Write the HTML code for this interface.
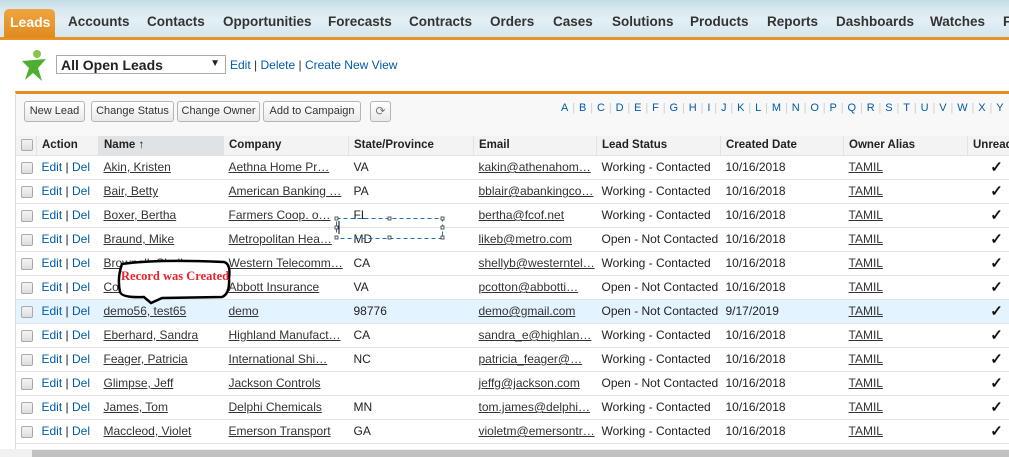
<!DOCTYPE html>
<html><head><meta charset="utf-8"><style>
*{margin:0;padding:0;box-sizing:border-box}
html,body{width:1009px;height:457px;overflow:hidden}
body{background:#fff;font-family:"Liberation Sans",Arial,sans-serif;font-size:12px;color:#222;position:relative}
.tabs{position:absolute;left:0;top:0;width:1009px;height:37px;background:linear-gradient(#c4dbe4 0,#d6e7ee 8px,#e3eff4 20px,#d4e6ee 37px)}
.ob{position:absolute;left:0;top:37px;width:1009px;height:3px;background:#e8922a}
.tab{position:absolute;top:14px;font-size:13.5px;font-weight:bold;color:#333}
.lead{position:absolute;left:4px;top:9px;width:51px;height:29px;background:linear-gradient(#f0a440,#e08a1e);border-radius:5px 5px 0 0;color:#fff;font-weight:bold;font-size:14px;padding:5px 0 0 6px}
.lk{color:#015ba7;text-decoration:none}
.sel{position:absolute;left:56px;top:55px;width:170px;height:19px;border:1px solid #aaa;font-size:14px;font-weight:bold;padding:1px 4px;background:#fff}
.panel{position:absolute;left:15px;top:91px;width:994px;height:46px;background:#f8f8f8;border-top:3px solid #e38d22;border-left:1px solid #ddd}
.btn{position:absolute;top:101px;height:21px;border:1px solid #b5b5b5;border-radius:3px;background:linear-gradient(#fff,#e9e9e9);font-size:11px;padding:3px 0;text-align:center;color:#333;white-space:nowrap;overflow:hidden}
.alpha{position:absolute;left:561px;top:102px;font-size:11px;color:#015ba7;white-space:nowrap}
.alpha i{color:#ccc;font-style:normal;margin:0 3.9px}
table{position:absolute;left:15px;top:136px;border-collapse:collapse;table-layout:fixed;width:1010px;border-left:1px solid #ddd}
td,th{height:24px;white-space:nowrap;overflow:hidden;padding:0 5px;font-size:12px;text-align:left;border-bottom:1px solid #e3e3e3}
th{height:19px;background:#f2f3f3;font-weight:bold;font-size:11.5px;border-right:1px solid #e0e3e5;color:#222}
th.s{background:#e0e3e5}
td u{color:#333}
.cb{display:inline-block;width:12px;height:12px;border:1px solid #aaa;border-radius:2px;background:linear-gradient(#f4f4f4,#ddd);vertical-align:middle}
tr.h td{background:#e3f3ff}
.ck{text-align:center;font-size:15px;font-weight:bold;color:#111}
</style></head><body>
<div class="tabs"></div><div class="ob"></div>
<div class="lead">Leads</div>
<span class="tab" style="left:68px">Accounts</span>
<span class="tab" style="left:147px">Contacts</span>
<span class="tab" style="left:223px">Opportunities</span>
<span class="tab" style="left:328px">Forecasts</span>
<span class="tab" style="left:409px">Contracts</span>
<span class="tab" style="left:490px">Orders</span>
<span class="tab" style="left:553px">Cases</span>
<span class="tab" style="left:612px">Solutions</span>
<span class="tab" style="left:690px">Products</span>
<span class="tab" style="left:767px">Reports</span>
<span class="tab" style="left:836px">Dashboards</span>
<span class="tab" style="left:930px">Watches</span>
<span class="tab" style="left:1003px">F</span>
<svg style="position:absolute;left:20px;top:49px" width="28" height="34" viewBox="0 0 28 34"><circle cx="17" cy="5" r="4" fill="#8bc34a"/><path d="M2 12 L26 10 L18 19 L22 32 L13 24 L5 31 L9 19 Z" fill="#4caf30"/></svg>
<div class="sel">All Open Leads<span style="position:absolute;right:5px;top:2px;font-size:10px">▼</span></div>
<div style="position:absolute;left:230px;top:58px;font-size:12px;color:#015ba7">Edit <span style="color:#333">|</span> Delete <span style="color:#333">|</span> Create New View</div>
<div class="panel"></div>
<div class="btn" style="left:24px;width:61px">New Lead</div>
<div class="btn" style="left:91px;width:83px">Change Status</div>
<div class="btn" style="left:177px;width:83px">Change Owner</div>
<div class="btn" style="left:263px;width:98px">Add to Campaign</div>
<div class="btn" style="left:370px;width:21px;padding:2px 0;font-size:12px;color:#777">⟳</div>
<div class="alpha">A<i>|</i>B<i>|</i>C<i>|</i>D<i>|</i>E<i>|</i>F<i>|</i>G<i>|</i>H<i>|</i>I<i>|</i>J<i>|</i>K<i>|</i>L<i>|</i>M<i>|</i>N<i>|</i>O<i>|</i>P<i>|</i>Q<i>|</i>R<i>|</i>S<i>|</i>T<i>|</i>U<i>|</i>V<i>|</i>W<i>|</i>X<i>|</i>Y</div>
<table>
<colgroup><col style="width:21px"><col style="width:62px"><col style="width:125px"><col style="width:125px"><col style="width:125px"><col style="width:123px"><col style="width:124px"><col style="width:123px"><col style="width:124px"><col style="width:58px"></colgroup>
<tr><th><span class="cb"></span></th><th>Action</th><th class="s">Name ↑</th><th>Company</th><th>State/Province</th><th>Email</th><th>Lead Status</th><th>Created Date</th><th>Owner Alias</th><th>Unread</th></tr>
<tr><td><span class="cb"></span></td><td><span class="lk">Edit</span> | <span class="lk">Del</span></td><td><u>Akin, Kristen</u></td><td><u>Aethna Home Pr…</u></td><td>VA</td><td><u>kakin@athenahom…</u></td><td>Working - Contacted</td><td>10/16/2018</td><td><u>TAMIL</u></td><td class="ck">✓</td></tr>
<tr><td><span class="cb"></span></td><td><span class="lk">Edit</span> | <span class="lk">Del</span></td><td><u>Bair, Betty</u></td><td><u>American Banking …</u></td><td>PA</td><td><u>bblair@abankingco…</u></td><td>Working - Contacted</td><td>10/16/2018</td><td><u>TAMIL</u></td><td class="ck">✓</td></tr>
<tr><td><span class="cb"></span></td><td><span class="lk">Edit</span> | <span class="lk">Del</span></td><td><u>Boxer, Bertha</u></td><td><u>Farmers Coop. o…</u></td><td>FL</td><td><u>bertha@fcof.net</u></td><td>Working - Contacted</td><td>10/16/2018</td><td><u>TAMIL</u></td><td class="ck">✓</td></tr>
<tr><td><span class="cb"></span></td><td><span class="lk">Edit</span> | <span class="lk">Del</span></td><td><u>Braund, Mike</u></td><td><u>Metropolitan Hea…</u></td><td>MD</td><td><u>likeb@metro.com</u></td><td>Open - Not Contacted</td><td>10/16/2018</td><td><u>TAMIL</u></td><td class="ck">✓</td></tr>
<tr><td><span class="cb"></span></td><td><span class="lk">Edit</span> | <span class="lk">Del</span></td><td><u>Brownell, Shelly</u></td><td><u>Western Telecomm…</u></td><td>CA</td><td><u>shellyb@westerntel…</u></td><td>Working - Contacted</td><td>10/16/2018</td><td><u>TAMIL</u></td><td class="ck">✓</td></tr>
<tr><td><span class="cb"></span></td><td><span class="lk">Edit</span> | <span class="lk">Del</span></td><td><u>Cotton, Phyllis</u></td><td><u>Abbott Insurance</u></td><td>VA</td><td><u>pcotton@abbotti…</u></td><td>Open - Not Contacted</td><td>10/16/2018</td><td><u>TAMIL</u></td><td class="ck">✓</td></tr>
<tr class="h"><td><span class="cb"></span></td><td><span class="lk">Edit</span> | <span class="lk">Del</span></td><td><u>demo56, test65</u></td><td><u>demo</u></td><td>98776</td><td><u>demo@gmail.com</u></td><td>Open - Not Contacted</td><td>9/17/2019</td><td><u>TAMIL</u></td><td class="ck">✓</td></tr>
<tr><td><span class="cb"></span></td><td><span class="lk">Edit</span> | <span class="lk">Del</span></td><td><u>Eberhard, Sandra</u></td><td><u>Highland Manufact…</u></td><td>CA</td><td><u>sandra_e@highlan…</u></td><td>Working - Contacted</td><td>10/16/2018</td><td><u>TAMIL</u></td><td class="ck">✓</td></tr>
<tr><td><span class="cb"></span></td><td><span class="lk">Edit</span> | <span class="lk">Del</span></td><td><u>Feager, Patricia</u></td><td><u>International Shi…</u></td><td>NC</td><td><u>patricia_feager@…</u></td><td>Working - Contacted</td><td>10/16/2018</td><td><u>TAMIL</u></td><td class="ck">✓</td></tr>
<tr><td><span class="cb"></span></td><td><span class="lk">Edit</span> | <span class="lk">Del</span></td><td><u>Glimpse, Jeff</u></td><td><u>Jackson Controls</u></td><td></td><td><u>jeffg@jackson.com</u></td><td>Open - Not Contacted</td><td>10/16/2018</td><td><u>TAMIL</u></td><td class="ck">✓</td></tr>
<tr><td><span class="cb"></span></td><td><span class="lk">Edit</span> | <span class="lk">Del</span></td><td><u>James, Tom</u></td><td><u>Delphi Chemicals</u></td><td>MN</td><td><u>tom.james@delphi…</u></td><td>Working - Contacted</td><td>10/16/2018</td><td><u>TAMIL</u></td><td class="ck">✓</td></tr>
<tr><td><span class="cb"></span></td><td><span class="lk">Edit</span> | <span class="lk">Del</span></td><td><u>Maccleod, Violet</u></td><td><u>Emerson Transport</u></td><td>GA</td><td><u>violetm@emersontr…</u></td><td>Working - Contacted</td><td>10/16/2018</td><td><u>TAMIL</u></td><td class="ck">✓</td></tr>
<tr><td><span class="cb"></span></td><td><span class="lk">Edit</span> | <span class="lk">Del</span></td><td><u>Mary, Ann</u></td><td><u>Grand Hotels</u></td><td>GA</td><td><u>mary@grand.com</u></td><td>Working - Contacted</td><td>10/16/2018</td><td><u>TAMIL</u></td><td class="ck">✓</td></tr>
</table>
<div style="position:absolute;left:0;top:449px;width:1009px;height:8px;background:#f1f1f1"></div>
<div style="position:absolute;left:32px;top:450px;width:977px;height:7px;background:#c1c1c1"></div>
<svg style="position:absolute;left:334px;top:215px" width="112" height="28"><rect x="2.5" y="3.5" width="106" height="20" fill="none" stroke="#1a6fb5" stroke-dasharray="4,3"/><g fill="#fff" stroke="#333" stroke-width="0.8"><rect x="1" y="2" width="3" height="3"/><rect x="54" y="2" width="3" height="3"/><rect x="107" y="2" width="3" height="3"/><rect x="1" y="11" width="3" height="3"/><rect x="107" y="11" width="3" height="3"/><rect x="1" y="21" width="3" height="3"/><rect x="54" y="21" width="3" height="3"/><rect x="107" y="21" width="3" height="3"/></g><line x1="5" y1="6" x2="5" y2="19" stroke="#000"/></svg>
<svg style="position:absolute;left:116px;top:258px" width="116" height="48"><path d="M6 6 Q40 1 108 4 Q115 6 113 20 Q114 36 106 39 L46 40 L35 45 L28 39 Q6 40 4 34 Q1 20 6 6 Z" fill="#fff" stroke="#000" stroke-width="2.5"/><text x="5" y="22" fill="#e8232a" font-family="Liberation Serif,serif" font-weight="bold" font-size="12.5">Record was Created</text></svg>
</body></html>
